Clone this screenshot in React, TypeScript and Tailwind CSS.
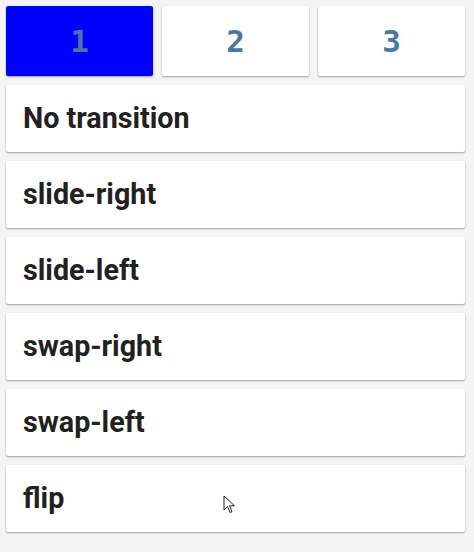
import React, { useState } from 'react'

const tabs = ['1', '2', '3']
const items = [
  'No transition',
  'slide-right',
  'slide-left',
  'swap-right',
  'swap-left',
  'flip',
]

const Cursor = () => (
  <svg
    className="absolute left-[217px] top-[30px]"
    width="14"
    height="20"
    viewBox="0 0 14 20"
    aria-hidden="true"
  >
    <path
      d="M1 1 L1 15 L4.5 11.5 L7 17.5 L9 16.7 L6.6 10.8 L11.5 10.8 Z"
      fill="#fff"
      stroke="#222"
      strokeWidth="1"
      strokeLinejoin="round"
    />
  </svg>
)

const App = () => {
  const [active, setActive] = useState(0)
  return (
    <div className="min-h-[552px] w-[474px] bg-[#f4f4f4] pt-[6px] pl-[6px] pr-[9px] font-['Roboto',sans-serif]">
      <div className="grid grid-cols-3 gap-[9px]">
        {tabs.map((t, i) => (
          <button
            key={t}
            type="button"
            onClick={() => setActive(i)}
            className={`${
              active === i ? 'bg-[#0000ff]' : 'bg-white'
            } flex h-[70px] items-center justify-center rounded-[2px] font-['DejaVu_Sans_Mono',monospace] text-[31px] font-bold text-[#4a76a6] shadow-[0_1px_2px_rgba(0,0,0,0.35)]`}
          >
            {t}
          </button>
        ))}
      </div>
      <div className="mt-[9px] flex flex-col gap-[9px]">
        {items.map((item, i) => (
          <div
            key={item}
            className="relative flex h-[67px] items-center rounded-[2px] bg-white pl-[17px] text-[28.7px] font-bold text-[#212121] shadow-[0_1px_2px_rgba(0,0,0,0.35)]"
          >
            {item}
            {i === items.length - 1 && <Cursor />}
          </div>
        ))}
      </div>
    </div>
  )
}

export default App
